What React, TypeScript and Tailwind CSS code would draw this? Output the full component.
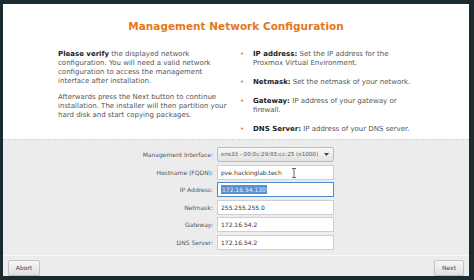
const bullets = [
  { key: 'IP address:', text: 'Set the IP address for the Proxmox Virtual Environment.' },
  { key: 'Netmask:', text: 'Set the netmask of your network.' },
  { key: 'Gateway:', text: 'IP address of your gateway or firewall.' },
  { key: 'DNS Server:', text: 'IP address of your DNS server.' },
]

const fields = [
  { label: 'Hostname (FQDN):', value: 'pve.hackinglab.tech' },
  { label: 'IP Address:', value: '172.16.54.130', active: true },
  { label: 'Netmask:', value: '255.255.255.0' },
  { label: 'Gateway:', value: '172.16.54.2' },
  { label: 'DNS Server:', value: '172.16.54.2' },
]

function Cursor() {
  return (
    <svg width="6" height="10" viewBox="0 0 6 10" className="absolute left-[73px] top-[2px]">
      <path d="M1 0.5h4M3 0.5v9M1 9.5h4" stroke="#555" strokeWidth="0.9" fill="none" />
    </svg>
  )
}

export default function App() {
  return (
    <div className="w-[474px] h-[280px] bg-[#1b2a2e] pt-[4px] pl-[3px] pr-[5px] pb-[4px] font-['DejaVu_Sans',sans-serif] text-[#555]">
      <div className="flex h-full flex-col bg-white">
        {/* top part */}
        <div className="h-[135px] shrink-0">
          <h1 className="pt-[15px] text-center text-[10.5px] leading-[14px] font-bold text-[#e67817]">
            Management Network Configuration
          </h1>
          <div className="mt-[17px] flex">
            <div className="ml-[55px] w-[170px] text-[7px] leading-[9px]">
              <p>
                <b className="text-[#222]">Please verify</b> the displayed network configuration. You will need a valid
                network configuration to access the management interface after installation.
              </p>
              <p className="mt-[7px]">
                Afterwards press the Next button to continue installation. The installer will then partition your hard
                disk and start copying packages.
              </p>
            </div>
            <ul className="ml-[12px] w-[175px] text-[7px] leading-[9px]">
              {bullets.map((b) => (
                <li key={b.key} className="mb-[10px] flex">
                  <span className="w-[13px] shrink-0 text-[#e67817]">•</span>
                  <span>
                    <b className="text-[#222]">{b.key}</b> {b.text}
                  </span>
                </li>
              ))}
            </ul>
          </div>
        </div>

        {/* form part */}
        <div className="flex flex-1 flex-col border-t border-dashed border-[#d8d8d8] bg-[#ececec]">
          <div className="mt-[7px] grid grid-cols-[210px_117px] gap-x-[4px] gap-y-[2.5px] text-[6px]">
            <div className="flex h-[15px] items-center justify-end text-[#555]">Management Interface:</div>
            <div className="flex h-[15px] items-center justify-between whitespace-nowrap rounded-[2px] border border-[#bdbdbd] bg-gradient-to-b from-[#f8f8f8] to-[#e2e2e2] pl-[3px] pr-[4px] text-[5.6px] text-[#555]">
              <span>ens33 - 00:0c:29:85:cc:25 (e1000)</span>
              <svg width="5" height="3" viewBox="0 0 5 3" className="shrink-0">
                <path d="M0 0h5L2.5 3z" fill="#444" />
              </svg>
            </div>
            {fields.map((f) => (
              <div key={f.label} className="contents">
                <div className="flex h-[15px] items-center justify-end text-[#555]">{f.label}</div>
                <div
                  className={
                    f.active
                      ? 'relative flex h-[15px] items-center border border-[#4a8ad0] bg-white px-[3px]'
                      : 'relative flex h-[15px] items-center border border-[#cfcfcf] bg-white px-[3px] text-[#333]'
                  }
                >
                  {f.active ? (
                    <span className="bg-[#5b8fd0] px-[1px] text-[#e6eefa]">{f.value}</span>
                  ) : (
                    <span>{f.value}</span>
                  )}
                  {f.label === 'Hostname (FQDN):' && <Cursor />}
                </div>
              </div>
            ))}
          </div>

          <div className="mt-[5px] flex flex-1 items-start justify-between border-t border-[#f8f8f8] px-[5px] pt-[4px]">
            <button className="h-[16px] w-[32px] rounded-[2px] border border-[#c4c4c4] bg-gradient-to-b from-[#f7f7f7] to-[#e0e0e0] text-[6px] text-[#444] shadow-[0_1px_1px_rgba(0,0,0,0.15)]">
              Abort
            </button>
            <button className="h-[16px] w-[30px] rounded-[2px] border border-[#c4c4c4] bg-gradient-to-b from-[#f7f7f7] to-[#e0e0e0] text-[6px] text-[#444] shadow-[0_1px_1px_rgba(0,0,0,0.15)]">
              Next
            </button>
          </div>
        </div>
      </div>
    </div>
  )
}
